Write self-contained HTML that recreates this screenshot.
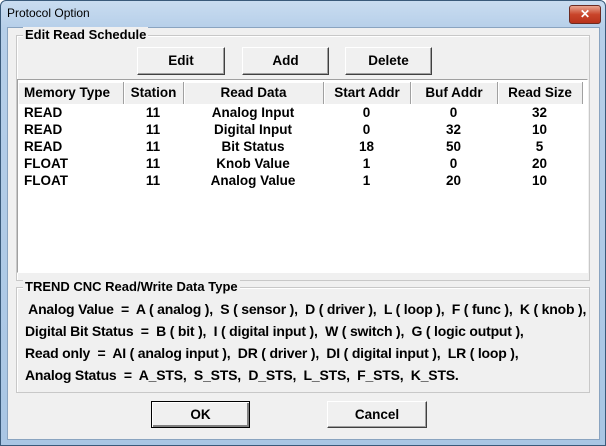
<html><head><style>
body{margin:0;width:606px;height:446px;overflow:hidden;font-family:"Liberation Sans",sans-serif;}
.win{position:absolute;left:0;top:0;width:604px;height:444px;border:1px solid #3a5a7a;border-radius:6px 6px 0 0;background:linear-gradient(#c9dcf0,#b6cfe9 28px,#a9c6e4);}
.client{position:absolute;left:7px;top:27px;width:591px;height:411px;background:#f0f0f0;border:1px solid #8aa4c0;}
.title{position:absolute;left:7px;top:6px;font-size:12px;color:#000;}
.close{position:absolute;left:569px;top:5px;width:30px;height:17px;border:1px solid #6b2b22;border-radius:3px;background:linear-gradient(#e9a590,#c9442a 50%,#b8321c);color:#fff;font-size:12px;font-weight:bold;text-align:center;line-height:17px;}
.abs{position:absolute;}
.grp{position:absolute;border:1px solid #c8c8c8;box-shadow:inset 1px 1px 0 #fff;}
.lbl{position:absolute;background:#f0f0f0;font-size:13px;font-weight:bold;padding:0 2px;}
.btn{position:absolute;height:26px;background:#f0f0f0;border:1px solid;border-color:#fff #404040 #404040 #fff;box-shadow:inset -1px -1px 0 #a0a0a0;font-size:13.5px;font-weight:bold;text-align:center;line-height:26px;box-sizing:border-box;}
.list{position:absolute;left:17px;top:79px;width:571px;height:194px;background:#fff;border:1px solid;border-color:#a0a0a0 #fff #fff #a0a0a0;box-sizing:border-box;}
.hd{position:absolute;top:2px;height:22px;font-size:13.5px;font-weight:bold;text-align:center;line-height:22px;border-right:1px solid #a0a0a0;box-sizing:border-box;background:#f0f0f0;box-shadow:inset 1px 1px 0 #fff;}
.c{position:absolute;font-size:13.5px;font-weight:bold;text-align:center;height:17px;line-height:17px;}
.t{position:absolute;font-size:14px;font-weight:bold;white-space:pre;letter-spacing:-0.2px;}
</style></head><body>
<div class="win"></div>
<div class="title">Protocol Option</div>
<div class="close">✕</div>
<div class="client"></div>
<div class="grp" style="left:16px;top:35px;width:572px;height:244px"></div>
<div class="lbl" style="left:23px;top:27px">Edit Read Schedule</div>
<div class="btn" style="left:137px;top:47px;width:88px;height:28px">Edit</div>
<div class="btn" style="left:242px;top:47px;width:87px;height:28px">Add</div>
<div class="btn" style="left:345px;top:47px;width:87px;height:28px">Delete</div>
<div class="list">
<div class="hd" style="left:0;width:106px;text-align:left;padding-left:6px">Memory Type</div>
<div class="hd" style="left:106px;width:60px">Station</div>
<div class="hd" style="left:166px;width:140px">Read Data</div>
<div class="hd" style="left:306px;width:87px">Start Addr</div>
<div class="hd" style="left:393px;width:87px">Buf Addr</div>
<div class="hd" style="left:480px;width:85px">Read Size</div>
</div>
<div class="abs" style="left:17px;top:104px">
<div class="c" style="left:7px;text-align:left">READ</div><div class="c" style="left:106px;width:60px">11</div><div class="c" style="left:166px;width:140px">Analog Input</div><div class="c" style="left:306px;width:87px">0</div><div class="c" style="left:393px;width:87px">0</div><div class="c" style="left:480px;width:85px">32</div>
</div>
<div class="abs" style="left:17px;top:121px">
<div class="c" style="left:7px;text-align:left">READ</div><div class="c" style="left:106px;width:60px">11</div><div class="c" style="left:166px;width:140px">Digital Input</div><div class="c" style="left:306px;width:87px">0</div><div class="c" style="left:393px;width:87px">32</div><div class="c" style="left:480px;width:85px">10</div>
</div>
<div class="abs" style="left:17px;top:138px">
<div class="c" style="left:7px;text-align:left">READ</div><div class="c" style="left:106px;width:60px">11</div><div class="c" style="left:166px;width:140px">Bit Status</div><div class="c" style="left:306px;width:87px">18</div><div class="c" style="left:393px;width:87px">50</div><div class="c" style="left:480px;width:85px">5</div>
</div>
<div class="abs" style="left:17px;top:155px">
<div class="c" style="left:7px;text-align:left">FLOAT</div><div class="c" style="left:106px;width:60px">11</div><div class="c" style="left:166px;width:140px">Knob Value</div><div class="c" style="left:306px;width:87px">1</div><div class="c" style="left:393px;width:87px">0</div><div class="c" style="left:480px;width:85px">20</div>
</div>
<div class="abs" style="left:17px;top:172px">
<div class="c" style="left:7px;text-align:left">FLOAT</div><div class="c" style="left:106px;width:60px">11</div><div class="c" style="left:166px;width:140px">Analog Value</div><div class="c" style="left:306px;width:87px">1</div><div class="c" style="left:393px;width:87px">20</div><div class="c" style="left:480px;width:85px">10</div>
</div>
<div class="grp" style="left:16px;top:287px;width:572px;height:104px"></div>
<div class="lbl" style="left:23px;top:279px">TREND CNC Read/Write Data Type</div>
<div class="t" style="left:25px;top:301px"> Analog Value  =  A ( analog ),  S ( sensor ),  D ( driver ),  L ( loop ),  F ( func ),  K ( knob ),</div>
<div class="t" style="left:25px;top:323px">Digital Bit Status  =  B ( bit ),  I ( digital input ),  W ( switch ),  G ( logic output ),</div>
<div class="t" style="left:25px;top:345px">Read only  =  AI ( analog input ),  DR ( driver ),  DI ( digital input ),  LR ( loop ),</div>
<div class="t" style="left:25px;top:367px">Analog Status  =  A_STS,  S_STS,  D_STS,  L_STS,  F_STS,  K_STS.</div>
<div class="btn" style="left:151px;top:401px;width:99px;height:27px;border-color:#000;box-shadow:inset 1px 1px 0 #fff,inset -2px -2px 0 #808080">OK</div>
<div class="btn" style="left:327px;top:401px;width:100px;height:27px">Cancel</div>
</body></html>
